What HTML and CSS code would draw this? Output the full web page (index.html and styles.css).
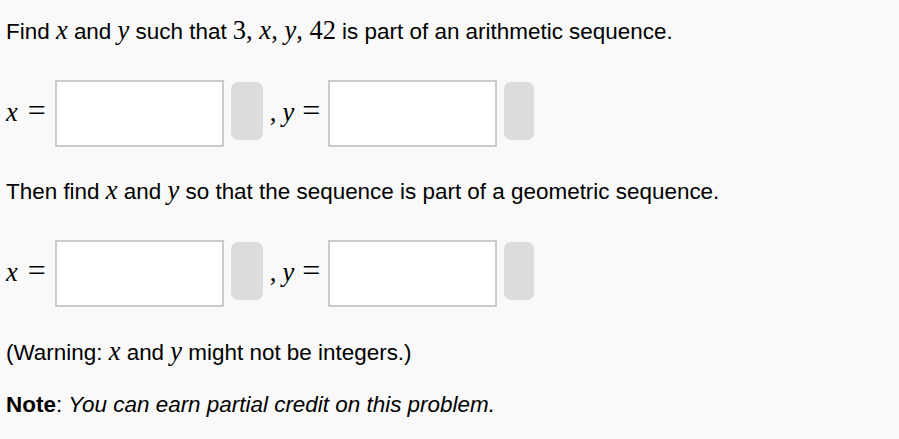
FILE: index.html
```html
<!DOCTYPE html>
<html lang="en">
<head>
<meta charset="utf-8">
<title>Sequence problem</title>
<link rel="stylesheet" href="styles.css">
</head>
<body>
<main class="problem">
  <p class="line">Find <span class="m">x</span> and <span class="m">y</span> such that <span class="m"><span class="n">3,</span> x<span class="n">,</span> y<span class="n">,</span> <span class="n">42</span></span> is part of an arithmetic sequence.</p>

  <div class="row">
    <span class="lab"><span class="m">x</span><span class="eq">=</span></span>
    <span class="box"></span>
    <span class="fb"></span>
    <span class="lab lab2"><span class="cm">,</span><span class="m">y</span><span class="eq eq2">=</span></span>
    <span class="box"></span>
    <span class="fb fb2"></span>
  </div>

  <p class="line l2">Then find <span class="m">x</span> and <span class="m">y</span> so that the sequence is part of a geometric sequence.</p>

  <div class="row r2">
    <span class="lab"><span class="m">x</span><span class="eq">=</span></span>
    <span class="box"></span>
    <span class="fb"></span>
    <span class="lab lab2"><span class="cm">,</span><span class="m">y</span><span class="eq eq2">=</span></span>
    <span class="box"></span>
    <span class="fb fb2"></span>
  </div>

  <p class="line warn">(Warning: <span class="m">x</span> and <span class="m">y</span> might not be integers.)</p>

  <p class="line note"><b>Note</b>: <i>You can earn partial credit on this problem.</i></p>
</main>
</body>
</html>
```

FILE: styles.css
```css
html, body {
  margin: 0;
  padding: 0;
  background: #f9f9f9;
}

body {
  font-family: "Liberation Sans", Arial, sans-serif;
  font-size: 22.45px;
  color: #000;
}

.problem {
  padding: 19px 6px 0 6px;
}

.line {
  margin: 0;
  line-height: 26px;
  white-space: nowrap;
}

.l2 { margin-top: 32px; }
.warn { margin-top: 33px; }
.note { margin-top: 26px; }

.m {
  font-family: "Liberation Serif", "Times New Roman", serif;
  font-style: italic;
  font-size: 26.5px;
  line-height: 0.7;
}

.m .n {
  font-style: normal;
}

.row {
  display: flex;
  align-items: center;
  height: 67px;
  margin-top: 35px;
}

.lab {
  display: flex;
  align-items: baseline;
  font-family: "Liberation Serif", "Times New Roman", serif;
  font-size: 26.5px;
  line-height: 26px;
  padding-bottom: 5px;
}

.lab .m {
  line-height: 26px;
}

.eq {
  font-size: 32px;
  line-height: 26px;
  margin-left: 10px;
  margin-right: 9px;
  font-style: normal;
}

.eq2 {
  margin-left: 8px;
  margin-right: 8px;
}

.lab2 {
  margin-left: 7px;
}

.cm {
  margin-right: 6px;
}

.box {
  box-sizing: border-box;
  width: 169px;
  height: 67px;
  background: #fff;
  border: 2px solid #cbcbcb;
}

.fb {
  align-self: flex-start;
  margin-top: 2px;
  margin-left: 7px;
  width: 32px;
  height: 58px;
  border-radius: 7px;
  background: #dcdcdc;
}

.fb2 {
  width: 30px;
}
```
